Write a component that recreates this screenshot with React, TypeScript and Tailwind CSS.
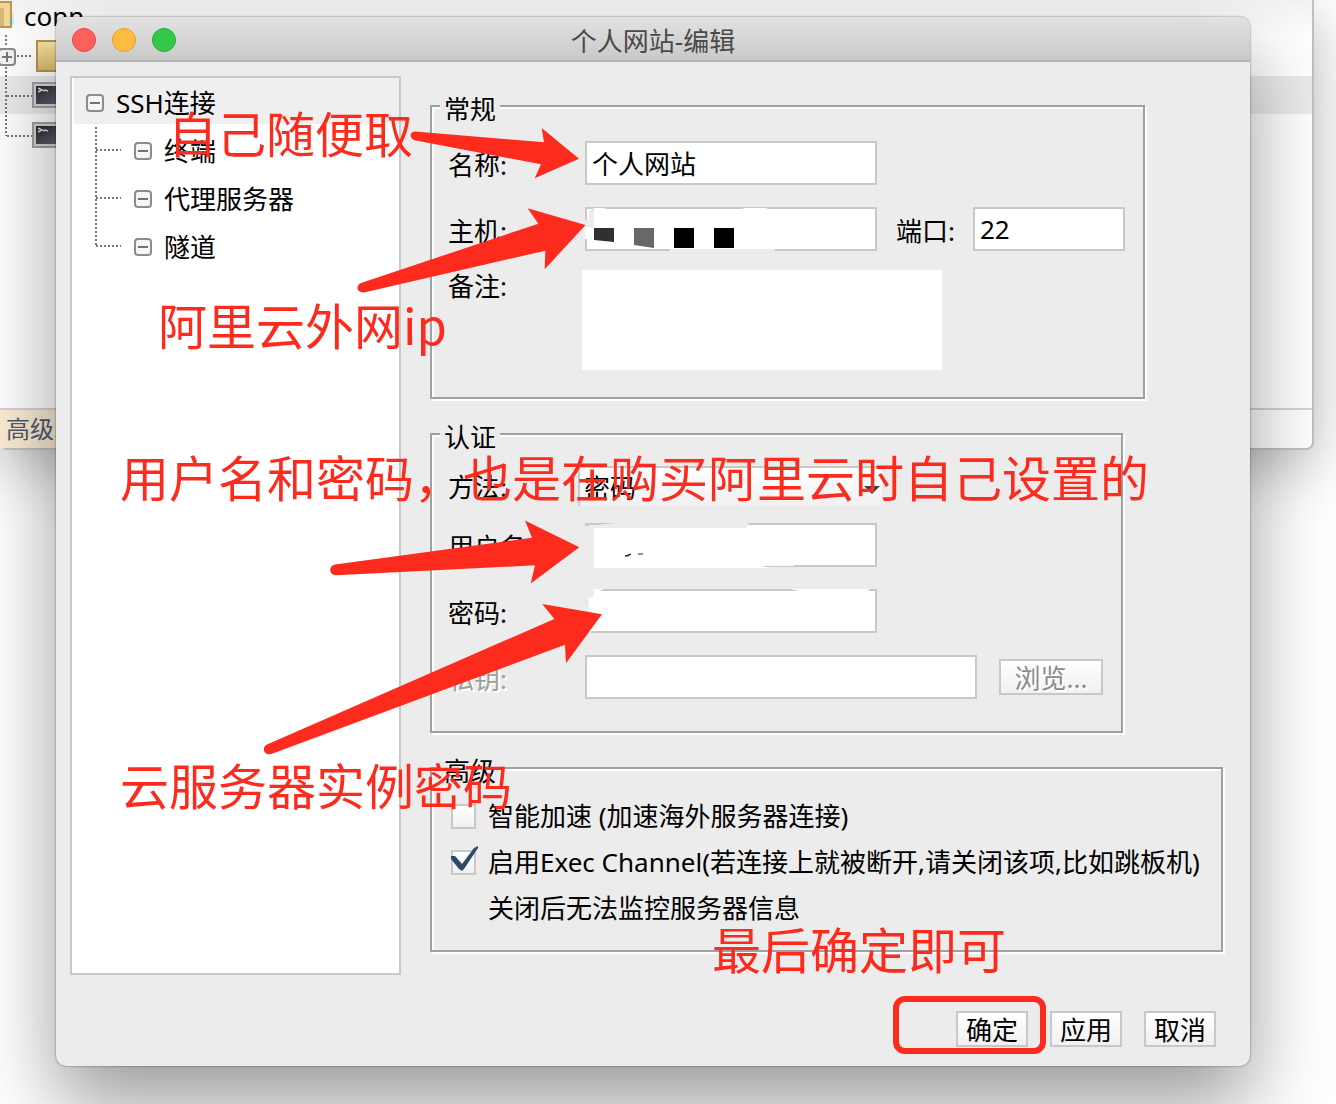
import { useState } from 'react';
import type { ReactNode } from 'react';

const treeItems = ['终端', '代理服务器', '隧道'];

const inputClass =
  'h-11 min-w-0 border-2 border-[#c8c8c8] bg-white px-[5px] text-[26px] leading-8 text-black outline-none';
const buttonClass =
  'h-9 border-2 border-[#c8c8c8] bg-linear-to-b from-white to-[#f0f0f0] pt-px text-[26px] leading-8 outline-none';
const labelClass = 'w-[137px] shrink-0 pt-1';

export default function App() {
  return (
    <div className="relative min-h-screen overflow-hidden bg-white pt-[17px] pr-[86px] pb-[38px] pl-14 font-['Noto_Sans','Noto_Sans_CJK_SC',sans-serif] text-[26px] leading-8 text-black">
      <ConnectionWindow />
      <EditDialog />
      <Annotations />
    </div>
  );
}

/* Connection manager, mostly hidden behind the dialog */
function ConnectionWindow() {
  return (
    <section className="absolute top-0 right-[22px] left-0 h-[450px] rounded-b-lg border-r-2 border-b-2 border-[#c0c0c0] bg-white shadow-[0_16px_60px_rgba(0,0,0,0.28)]">
      <div className="flex h-full flex-col">
        <div className="flex h-[76px] shrink-0 bg-linear-to-b from-[#f2f2f2] to-white to-50% pl-6">
          <span>conn</span>
        </div>
        <div className="h-[38px] shrink-0 bg-[#ebebeb]" />
        <div className="flex-1" />
        <div className="h-10 shrink-0 border-t-2 border-[#d4d4d4]">
          <button type="button" className="h-[38px] w-40 bg-[#fbecd3] pl-1.5 text-left text-2xl text-[#4f5a70]">
            高级...
          </button>
        </div>
      </div>
      <svg className="absolute top-0 left-0 h-40 w-16" viewBox="0 0 64 160" fill="none" aria-hidden="true">
        <defs>
          <linearGradient id="folder" x1="0" y1="0" x2="0" y2="1">
            <stop offset="0" stopColor="#f8e6a8" />
            <stop offset="1" stopColor="#d9b869" />
          </linearGradient>
          <linearGradient id="screen" x1="0" y1="0" x2="1" y2="1">
            <stop offset="0" stopColor="#26272b" />
            <stop offset="1" stopColor="#6d6e80" />
          </linearGradient>
        </defs>
        <path d="M-2 2h13v25H-2z" fill="#f0d598" stroke="#c29547" strokeWidth="2" />
        <path d="M0 8h4v18H0z" fill="#d6b87a" />
        <path d="M4 4h6v20H4z" fill="#f3d596" />
        <path d="M12 13h2v11h-2z" fill="#dde8ee" />
        <path d="M10 20h2v4h-2z" fill="#27b8f0" />
        <path d="M6 35v12M6 67v69M17 56h15M7 96h25M7 136h25" stroke="#777" strokeWidth="2" strokeDasharray="2 2" />
        <rect x="-1" y="49" width="16" height="16" rx="3" fill="#f4f4f4" stroke="#8a8a8a" strokeWidth="2" />
        <path d="M2 57h10M7 52v10" stroke="#777" strokeWidth="2" />
        <rect x="37" y="41" width="30" height="30" fill="url(#folder)" stroke="#b59350" strokeWidth="2" />
        {[83, 123].map((y) => (
          <g key={y}>
            <rect x="33" y={y} width="34" height="24" fill="#d6d6d6" stroke="#a0a0a0" strokeWidth="2" />
            <rect x="36" y={y + 3} width="28" height="18" fill="url(#screen)" />
            <path d={`M38 ${y + 5}l4 2-4 2M43 ${y + 8}l2-1 3 1`} stroke="#ddd" strokeWidth="1.5" />
          </g>
        ))}
      </svg>
    </section>
  );
}

function EditDialog() {
  return (
    <main className="relative rounded-[10px] bg-[#ececec] shadow-[0_0_2px_rgba(0,0,0,0.6),0_38px_80px_rgba(0,0,0,0.4)]">
      <header className="relative flex h-[45px] items-center justify-center rounded-t-[10px] border-b-2 border-[#b4b4b4] bg-linear-to-b from-[#e2e2e2] to-[#c9c9c9]">
        <div className="absolute left-4 flex gap-4 pt-0.5">
          <button type="button" aria-label="关闭" className="size-6 rounded-full border border-[#e2463f] bg-[#fc605c]" />
          <button type="button" aria-label="最小化" className="size-6 rounded-full border border-[#e0a030] bg-[#fdbc40]" />
          <button type="button" aria-label="缩放" className="size-6 rounded-full border border-[#26aa35] bg-[#34c84a]" />
        </div>
        <h1 className="pt-1 text-[26px] text-[#4a4a4a]">个人网站-编辑</h1>
      </header>

      <div className="flex gap-[29px] pt-3.5 pr-[27px] pl-3.5">
        <SettingsTree />
        <form className="flex min-w-0 flex-1 flex-col gap-[19px] pt-3.5 pb-[23px]">
          <GeneralGroup />
          <AuthGroup />
          <AdvancedGroup />
        </form>
      </div>

      <footer className="flex justify-end gap-[22px] pt-9 pr-[34px] pb-[19px]">
        {['确定', '应用', '取消'].map((label) => (
          <button key={label} type="button" className={`${buttonClass} w-[72px]`}>
            {label}
          </button>
        ))}
      </footer>
    </main>
  );
}

function SettingsTree() {
  return (
    <nav className="w-[331px] shrink-0 border-2 border-[#c8c8c8] bg-white">
      <div className="ml-0.5 flex h-[46px] items-center gap-3 bg-[#efefef] pt-1 pl-3">
        <CollapseIcon />
        <a href="#ssh">SSH连接</a>
      </div>
      <ul className="pt-[3px]">
        {treeItems.map((item) => (
          <li key={item} className="flex h-12 items-center pl-[23px]">
            <svg className="h-12 w-[26px] shrink-0" viewBox="0 0 26 48" aria-hidden="true">
              <path
                d={item === '隧道' ? 'M1 0v24M1 23h25' : 'M1 0v48M1 23h25'}
                fill="none"
                stroke="#777"
                strokeWidth="2"
                strokeDasharray="2 2"
              />
            </svg>
            <span className="ml-[13px]">
              <CollapseIcon />
            </span>
            <a href="#ssh" className="ml-3">
              {item}
            </a>
          </li>
        ))}
      </ul>
    </nav>
  );
}

function CollapseIcon() {
  return (
    <svg className="size-[18px] shrink-0" viewBox="0 0 18 18" fill="none" aria-hidden="true">
      <rect x="1" y="1" width="16" height="16" rx="3" fill="#f6f6f6" stroke="#8c8c8c" strokeWidth="2" />
      <path d="M4 9h10" stroke="#707070" strokeWidth="2" />
    </svg>
  );
}

function Group({ title, className, children }: { title: string; className: string; children: ReactNode }) {
  return (
    <fieldset
      className={`min-w-0 border-2 border-[#a0a0a0] pl-2 shadow-[2px_2px_0_#fff,inset_2px_2px_0_#fff] ${className}`}
    >
      <legend className="bg-[#ececec] px-1 pt-1.5 leading-[26px]">{title}</legend>
      {children}
    </fieldset>
  );
}

function GeneralGroup() {
  const [name, setName] = useState('个人网站');
  const [port, setPort] = useState('22');

  return (
    <Group title="常规" className="mr-[78px] pb-[27px]">
      <div className="flex flex-col pt-[19px] pl-2">
        <div className="flex items-center">
          <label htmlFor="name" className={labelClass}>名称:</label>
          <input id="name" className={`${inputClass} w-[292px]`} value={name} onChange={(e) => setName(e.target.value)} />
        </div>
        <div className="flex items-center pt-[22px]">
          <label htmlFor="host" className={labelClass}>主机:</label>
          <div className="relative flex w-[292px]">
            <input id="host" className={`${inputClass} w-full`} />
            <svg className="pointer-events-none absolute top-0 left-0 h-11 w-[292px]" viewBox="0 0 292 44" aria-hidden="true">
              <path d="M0 13h4V4l5-3v20H0z" fill="#ececec" />
              <path d="M9 1h10l3 2v4H9zM150 4l10-3h20l8 2v3h-38zM0 20h6v12H0z" fill="#fff" />
              <path d="M85 42h105v2H85z" fill="#ececec" />
              <path d="M9 21h20v14l-20-2z" fill="#303030" />
              <path d="M49 21h20v20l-20-3z" fill="#686868" />
              <path d="M89 21h20v20H89zM129 21h20v20h-20z" fill="#000" />
            </svg>
          </div>
          <label htmlFor="port" className="ml-[19px] w-[77px] shrink-0 pt-1">端口:</label>
          <input id="port" className={`${inputClass} w-[152px]`} value={port} onChange={(e) => setPort(e.target.value)} />
        </div>
        <div className="flex pt-[19px]">
          <label htmlFor="remark" className="w-[134px] shrink-0">备注:</label>
          <textarea id="remark" className="block h-[100px] w-[360px] resize-none bg-white px-1.5 outline-none" />
        </div>
      </div>
    </Group>
  );
}

function AuthGroup() {
  return (
    <Group title="认证" className="mr-[100px] pb-8">
      <div className="flex flex-col pt-4 pl-2">
        <div className="flex items-center">
          <label htmlFor="method" className="w-[130px] shrink-0 pt-0.5">方法:</label>
          <div className="relative flex w-[304px]">
            <select
              id="method"
              className="h-10 w-full appearance-none border-t-2 border-l-2 border-[#c8c8c8] bg-linear-to-b from-white to-[#f0f0f0] px-1 pt-0.5 text-[26px] leading-8 outline-none"
            >
              <option>密码</option>
              <option>公钥</option>
            </select>
            <svg className="pointer-events-none absolute top-5 right-0.5 h-2 w-4" viewBox="0 0 16 8" aria-hidden="true">
              <path d="M0 0h16L8 8z" fill="#404040" />
            </svg>
          </div>
        </div>
        <div className="flex items-center pt-[17px]">
          <label htmlFor="user" className={labelClass}>用户名:</label>
          <div className="relative flex w-[292px]">
            <input id="user" className={`${inputClass} w-full`} />
            <svg className="pointer-events-none absolute top-0 left-0 h-12 w-[292px]" viewBox="0 0 292 48" aria-hidden="true">
              <path d="M0 4h9v40H0zM0 4l2-1 28-3h134l-3 5H0z" fill="#ececec" />
              <path d="M0 0h28l-24 2v1H0z" fill="#c8c8c8" />
              <path d="M9 5h200v38H175l11 2H9z" fill="#fff" />
              <path d="M40 33l6-2-3 2zM53 31h5" fill="#222" stroke="#222" />
            </svg>
          </div>
        </div>
        <div className="flex items-center pt-[22px]">
          <label htmlFor="password" className={labelClass}>密码:</label>
          <div className="relative flex w-[292px]">
            <input id="password" type="password" className={`${inputClass} w-full`} />
            <svg className="pointer-events-none absolute top-0 left-0 h-11 w-[292px]" viewBox="0 0 292 44" aria-hidden="true">
              <path d="M0 0h9v7l-9 5zM0 12h6v32H0z" fill="#ececec" />
              <path d="M2 10l7-3V0h10l-7 3v9H2zM205 0h80l-4 3h-62zM4 12h8v30H4z" fill="#fff" />
            </svg>
          </div>
        </div>
        <div className="flex items-center pt-[22px]">
          <label htmlFor="key" className={`${labelClass} text-[#a0a0a0] [text-shadow:2px_2px_0_#fff]`}>私钥:</label>
          <input id="key" disabled className={`${inputClass} w-[392px]`} />
          <button
            type="button"
            disabled
            className={`${buttonClass} ml-[22px] w-[104px] text-[#8c8c8c] [text-shadow:2px_2px_0_#fff]`}
          >
            浏览...
          </button>
        </div>
      </div>
    </Group>
  );
}

function AdvancedGroup() {
  return (
    <Group title="高级" className="pb-[19px]">
      <div className="flex flex-col pt-[9px] pl-[11px] whitespace-nowrap">
        <Check id="accelerate" label="智能加速 (加速海外服务器连接)" />
        <Check id="exec" label="启用Exec Channel(若连接上就被断开,请关闭该项,比如跳板机)" defaultChecked />
        <p className="flex h-[46px] items-center pl-[37px]">关闭后无法监控服务器信息</p>
      </div>
    </Group>
  );
}

function Check({ id, label, defaultChecked }: { id: string; label: string; defaultChecked?: boolean }) {
  return (
    <div className="relative flex h-[46px] items-center gap-3">
      <input
        id={id}
        type="checkbox"
        defaultChecked={defaultChecked}
        className="peer size-[25px] shrink-0 appearance-none border-2 border-[#c8c8c8] bg-linear-to-b from-white to-[#f0f0f0]"
      />
      <label htmlFor={id}>{label}</label>
      <svg
        className="pointer-events-none absolute top-1.5 left-0 hidden h-7 w-7 peer-checked:block"
        viewBox="0 0 28 28"
        fill="none"
        aria-hidden="true"
      >
        <path d="M0 11h4l7 8L23 3l4-2v2L13 24l-2 2-3-2-8-10z" fill="#2b4c68" />
      </svg>
    </div>
  );
}

/* Hand-placed notes and arrows on top of the windows */
function Annotations() {
  const noteClass = 'absolute text-[49px] leading-[56px] whitespace-nowrap';

  return (
    <div className="pointer-events-none absolute inset-0 font-['Noto_Sans_CJK_SC',sans-serif] text-[#fc2b1d]">
      <svg className="absolute top-0 left-0 h-[1104px] w-[1336px]" viewBox="0 0 1336 1104" fill="currentColor" aria-hidden="true">
        <path d="M415 131.5L544 142.3L541.7 128L579 158.7L534.7 178.3L541 164.3L416 140.5C409 139 409 132 415 131.5z" />
        <path d="M361 283L538.3 223.7L527.7 208.3L585.5 225L544.7 269.3L545.3 250.7L364 292.5C357 293 355 286 361 283z" />
        <path d="M335 564.4L532 537.7L525 520.5L579.3 547.3L530.7 583.5L535 565.3L336 575.3C329 575 328 566 335 564.4z" />
        <path d="M267 744.5L554.3 619L542.3 604L602 614.3L566 663.3L565 644.7L272 753.8C264 756 261 748 267 744.5z" />
      </svg>
      <p className={`${noteClass} top-[104px] left-[168px]`}>自己随便取</p>
      <p className={`${noteClass} top-[296px] left-[158px]`}>阿里云外网ip</p>
      <p className={`${noteClass} top-[448px] left-[120px]`}>用户名和密码，也是在购买阿里云时自己设置的</p>
      <p className={`${noteClass} top-[756px] left-[120px]`}>云服务器实例密码</p>
      <p className={`${noteClass} top-[920px] left-[712px]`}>最后确定即可</p>
      <div className="absolute top-[996px] left-[893px] h-[58px] w-[153px] rounded-xl border-6 border-current" />
    </div>
  );
}
